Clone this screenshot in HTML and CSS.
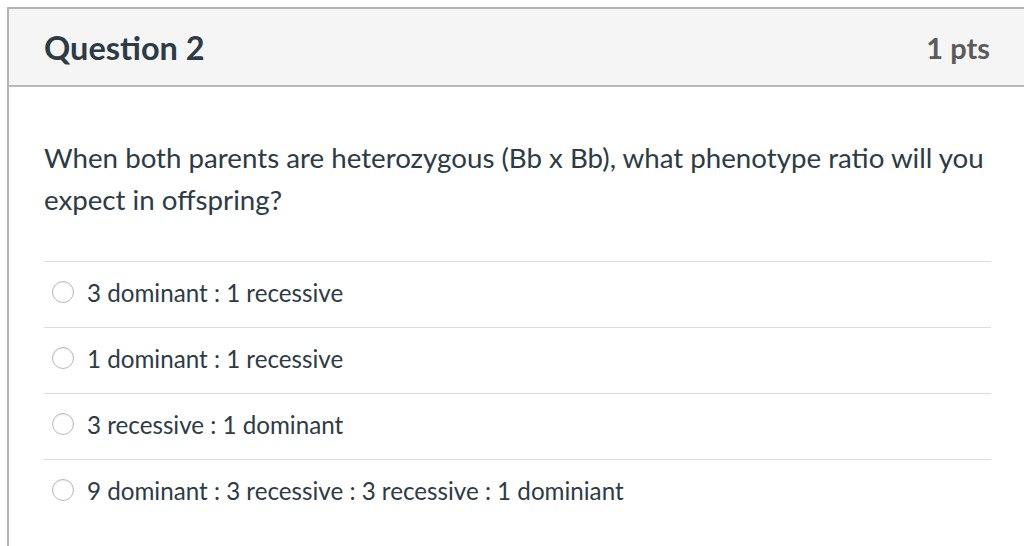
FILE: index.html
```html
<!DOCTYPE html>
<html>
<head>
<meta charset="utf-8">
<link rel="stylesheet" href="styles.css">
</head>
<body>
<div class="card">
  <div class="header">
    <h2 class="title">Question 2</h2>
    <span class="pts">1 pts</span>
  </div>
  <div class="content">
    <p class="question">When both parents are heterozygous (Bb x Bb), what phenotype ratio will you expect in offspring?</p>
    <ul class="answers">
      <li class="answer"><span class="radio"></span><span class="label">3 dominant : 1 recessive</span></li>
      <li class="answer"><span class="radio"></span><span class="label">1 dominant : 1 recessive</span></li>
      <li class="answer"><span class="radio"></span><span class="label">3 recessive : 1 dominant</span></li>
      <li class="answer"><span class="radio"></span><span class="label">9 dominant : 3 recessive : 3 recessive : 1 dominiant</span></li>
    </ul>
  </div>
</div>
</body>
</html>
```
FILE: styles.css
```css
html, body {
  margin: 0;
  padding: 0;
  background: #ffffff;
  overflow: hidden;
}
body {
  font-family: Lato, "Noto Sans", sans-serif;
  color: #2d3b45;
}
.card {
  margin: 7px 0 0 7px;
  border-left: 2px solid #b4b4b4;
  border-top: 2px solid #b4b4b4;
  height: 537px;
}
.header {
  display: flex;
  align-items: center;
  justify-content: space-between;
  height: 76px;
  background: #f5f5f5;
  border-bottom: 2px solid #b9b9b9;
  padding: 0 34px 0 35px;
}
.title {
  margin: 0;
  font-size: 32.5px;
  font-weight: 700;
  color: #2d3b45;
}
.pts {
  font-size: 29px;
  font-weight: 700;
  color: #5b5b5b;
}
.content {
  padding: 0 33px 0 35px;
}
.question {
  margin: 0;
  padding-top: 50px;
  font-size: 27.7px;
  line-height: 42px;
  padding-bottom: 40px;
}
.answers {
  list-style: none;
  margin: 0;
  padding: 0;
}
.answer {
  display: flex;
  align-items: center;
  height: 60px;
  padding-bottom: 5px;
  border-top: 1px solid #dcdcdc;
  padding-left: 8px;
  font-size: 24.2px;
}
.radio {
  width: 20px;
  height: 20px;
  border: 1px solid #b9b9b9;
  border-radius: 50%;
  box-shadow: inset 0 1px 2px rgba(0,0,0,0.08);
  margin-right: 13px;
  flex: none;
}
```
